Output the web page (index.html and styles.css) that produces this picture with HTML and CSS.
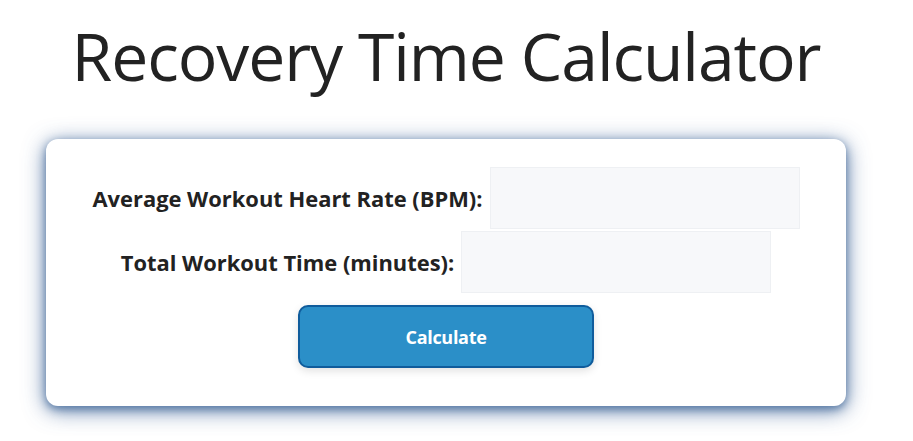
FILE: index.html
```html
<!DOCTYPE html>
<html>
<head>
<meta charset="utf-8">
<title>Recovery Time Calculator</title>
<link rel="stylesheet" href="styles.css">
</head>
<body>
<div class="page">
  <h1 class="title">Recovery Time Calculator</h1>
  <div class="card">
    <div class="row">
      <label class="label" for="hr">Average Workout Heart Rate (BPM):</label>
      <input class="field" id="hr" type="number">
    </div>
    <div class="row">
      <label class="label" for="time">Total Workout Time (minutes):</label>
      <input class="field" id="time" type="number">
    </div>
    <button class="btn" type="button">Calculate</button>
  </div>
</div>
</body>
</html>
```
FILE: styles.css
```css
html, body {
  margin: 0;
  padding: 0;
  background: #ffffff;
}
body {
  font-family: "Open Sans", "Noto Sans", sans-serif;
  color: #222222;
}
.page {
  width: 892px;
  display: flex;
  flex-direction: column;
  align-items: center;
  padding-bottom: 30px;
}
.title {
  margin: 9px 0 0 0;
  font-size: 66px;
  font-weight: 400;
  line-height: 92px;
  letter-spacing: -1.1px;
  color: #222222;
}
.card {
  margin-top: 38px;
  width: 800px;
  box-sizing: border-box;
  background: #ffffff;
  border-radius: 12px;
  box-shadow: 0 3px 8px rgba(60, 100, 150, 0.7), 0 4px 22px rgba(50, 90, 145, 0.75);
  padding: 28px 0 38px 0;
  display: flex;
  flex-direction: column;
  align-items: center;
}
.row {
  display: flex;
  align-items: center;
  gap: 7px;
  margin-bottom: 2px;
}
.label {
  font-size: 21.9px;
  font-weight: 700;
  color: #222222;
}
.field {
  width: 310px;
  height: 62px;
  box-sizing: border-box;
  border: 1px solid #eef0f3;
  background: #f7f8fa;
  margin: 0;
  padding: 0 10px;
  font-size: 18px;
}
.btn {
  margin-top: 10px;
  width: 296px;
  height: 63px;
  box-sizing: border-box;
  border: 2px solid #0f5c9c;
  border-radius: 10px;
  background: #2b8fc8;
  color: #ffffff;
  font-family: "Open Sans", "Noto Sans", sans-serif;
  font-size: 18px;
  font-weight: 700;
  letter-spacing: -0.3px;
  box-shadow: 0 3px 8px rgba(0, 0, 0, 0.12);
  cursor: pointer;
}
```
